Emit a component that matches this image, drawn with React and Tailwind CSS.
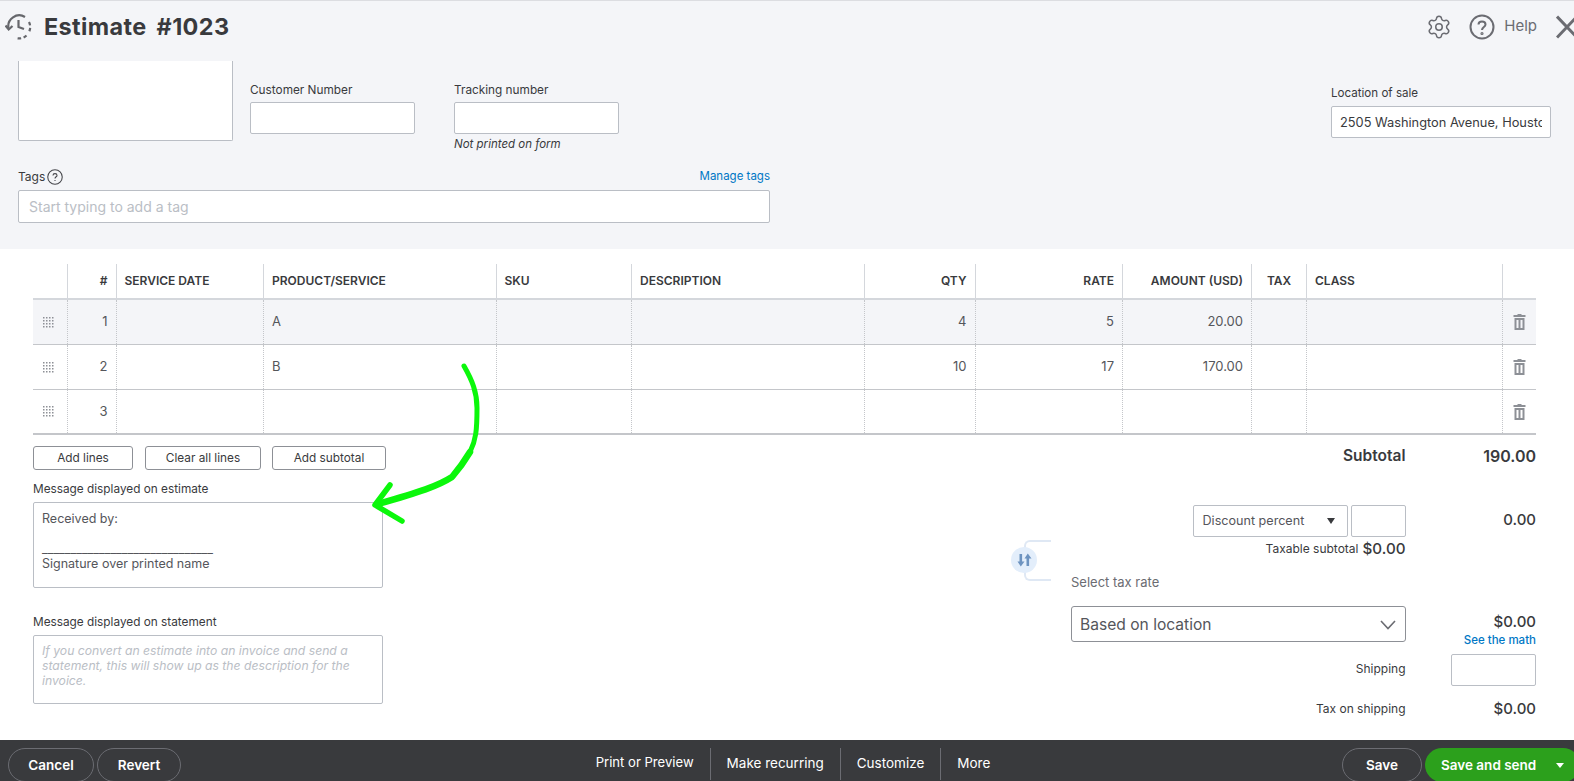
import { Settings } from 'lucide-react';

const FONT = 'font-[Inter,"Liberation_Sans",sans-serif]';
const inputCls = 'border border-[#babec5] rounded-[2px] bg-white outline-none';

function HistoryIcon() {
  return (
    <svg width="28" height="27" viewBox="0 0 28 27" fill="none" stroke="#66676c" strokeWidth="2.2">
      <path d="M3.5 15.5 A11 11 0 0 1 20 4" />
      <path d="M24 9 A11 11 0 0 1 24 19" strokeDasharray="3.5 2.5" />
      <path d="M21.5 22.5 A11 11 0 0 1 11 25" strokeDasharray="3.5 2.5" />
      <path d="M0.5 12.5 L3.7 16.5 L7.5 13" />
      <path d="M13.5 7 V14 L19 16" />
    </svg>
  );
}

function GripIcon() {
  return (
    <svg width="11" height="11" viewBox="0 0 11 11" fill="#8d9096">
      {[0, 3, 6, 9].map((y) =>
        [0, 3, 6, 9].map((x) => <rect key={`${x}-${y}`} x={x} y={y} width="1.5" height="1.5" />)
      )}
    </svg>
  );
}

function TrashIcon() {
  return (
    <svg width="13" height="16" viewBox="0 0 13 16" fill="#8d9096">
      <rect x="4.5" y="0" width="4" height="1" />
      <rect x="0.5" y="1" width="12" height="2" />
      <path d="M1.5 4h10v12h-10z M3.5 6v8h2V6z M7.5 6v8h2V6z" fillRule="evenodd" />
    </svg>
  );
}

function Arrow() {
  return (
    <svg className="absolute left-0 top-0 pointer-events-none" width="1574" height="781" fill="none" stroke="#0bf70b" strokeLinecap="round" strokeLinejoin="round">
      <path d="M464 366 C472 380 477 392 477 408 C477 430 476 440 470 452" strokeWidth="5" />
      <path d="M470 452 C464 462 458 470 452 477 C438 486 420 492 378 504" strokeWidth="6.5" />
      <path d="M390 485 L375 505 L402 521" strokeWidth="5.5" />
    </svg>
  );
}

const COLS = 'grid grid-cols-[33.5px_49px_147.5px_232.5px_135.5px_233px_110.5px_147.5px_129px_55px_195.5px_34.5px]';

const HEADERS = [
  ['', ''],
  ['#', 'text-right'],
  ['SERVICE DATE', ''],
  ['PRODUCT/SERVICE', ''],
  ['SKU', ''],
  ['DESCRIPTION', ''],
  ['QTY', 'text-right'],
  ['RATE', 'text-right'],
  ['AMOUNT (USD)', 'text-right'],
  ['TAX', 'text-center'],
  ['CLASS', ''],
  ['', ''],
];

function Row({ n, product, qty, rate, amount, active, last }) {
  const cell = 'border-l border-dotted border-[#c4c6ca] px-2 flex items-center';
  return (
    <div className={`${COLS} h-[45px] text-[13px] text-[#55565b] ${last ? 'border-b-2' : 'border-b'} border-[#c4c6ca] ${active ? 'bg-[#f4f5f8]' : ''}`}>
      <div className="flex items-center justify-center pr-[2px]"><GripIcon /></div>
      <div className={`${cell} justify-end`}>{n}</div>
      <div className={cell}></div>
      <div className={cell}>{product}</div>
      <div className={cell}></div>
      <div className={cell}></div>
      <div className={`${cell} justify-end`}>{qty}</div>
      <div className={`${cell} justify-end`}>{rate}</div>
      <div className={`${cell} justify-end`}>{amount}</div>
      <div className={cell}></div>
      <div className={cell}></div>
      <div className={`${cell} justify-center px-0`}><TrashIcon /></div>
    </div>
  );
}

function LineButton({ width, children }) {
  return (
    <button className={`${width} h-[24px] shrink-0 pt-[1px] border border-[#8d9096] rounded-[3px] text-[11.8px] text-[#393a3d] bg-white`}>{children}</button>
  );
}

function FootLink({ children, first }) {
  return (
    <div className={`h-[32px] flex items-center px-[16px] pb-[2px] text-white ${first ? 'text-[13.1px]' : 'border-l border-[#6b6c72] text-[13.5px]'}`}>{children}</div>
  );
}

export default function App() {
  return (
    <div className={`${FONT} relative h-[781px] w-[1574px] overflow-hidden flex flex-col bg-white text-[#393a3d]`}>
      {/* title bar */}
      <div className="h-[61px] shrink-0 bg-[#f4f5f8] border-t border-[#dcdde1] flex items-center pl-[5px] pb-[9px] overflow-hidden">
        <HistoryIcon />
        <h1 className="ml-[11px] text-[23.4px] font-bold tracking-[0.4px] [word-spacing:4px] text-[#393a3d]">Estimate #1023</h1>
        <div className="ml-auto flex items-center text-[#6b6c72]">
          <Settings size={26} strokeWidth={1.4} />
          <svg className="ml-[17px]" width="26" height="26" viewBox="0 0 26 26" fill="none" stroke="#6b6c72" strokeWidth="2">
            <circle cx="13" cy="13" r="11.5" />
            <path d="M9.5 10.5 C9.5 6.5 16.5 6.5 16.5 10.5 C16.5 13 13 13 13 16" />
            <circle cx="13" cy="19.5" r="0.6" />
          </svg>
          <span className="ml-[9px] text-[15px]">Help</span>
          <svg className="ml-[19px] mr-[-2px]" width="20" height="24" viewBox="0 0 20 24" fill="none" stroke="#6b6c72" strokeWidth="3">
            <path d="M1 1.5 L21 22.5 M1 22.5 L21 1.5" />
          </svg>
        </div>
      </div>

      {/* form top */}
      <div className="h-[188px] shrink-0 bg-[#f4f5f8] px-[18px]">
        <div className="flex">
          <div className="w-[214.5px] h-[80px] bg-white border border-t-0 border-[#babec5] rounded-b-[2px]"></div>
          <div className="ml-[17.5px] w-[165px] pt-[21px]">
            <div className="text-[11.8px] leading-[16px] mb-[4px]">Customer Number</div>
            <input className={`${inputCls} w-[165px] h-[32px] block`} />
          </div>
          <div className="ml-[39px] w-[165px] pt-[21px]">
            <div className="text-[11.8px] leading-[16px] mb-[4px]">Tracking number</div>
            <input className={`${inputCls} w-[165px] h-[32px] block`} />
            <div className="text-[11.5px] italic leading-[14px] mt-[3px] whitespace-nowrap">Not printed on form</div>
          </div>
          <div className="ml-auto mr-[5px] w-[220px] pt-[24px]">
            <div className="text-[11.6px] leading-[16px] mb-[5px]">Location of sale</div>
            <input readOnly value="2505 Washington Avenue, Houston" className={`${inputCls} w-[220px] h-[32px] block px-[8px] text-[12.8px]`} />
          </div>
        </div>
        <div className="w-[752px] mt-[16px]">
          <div className="flex justify-between items-center h-[20px] mb-[3px]">
            <div className="flex items-center gap-[2px] text-[12px]">
              Tags
              <svg width="16" height="16" viewBox="0 0 15 15" fill="none" stroke="#45464b" strokeWidth="1">
                <circle cx="7.5" cy="7.5" r="6.8" />
                <path d="M5.6 6 C5.6 3.8 9.4 3.8 9.4 6 C9.4 7.3 7.5 7.3 7.5 9" />
                <path d="M7.5 10.3 V11.3" />
              </svg>
            </div>
            <a className="text-[11.5px] text-[#0077c5]">Manage tags</a>
          </div>
          <input placeholder="Start typing to add a tag" className={`${inputCls} w-full h-[33px] block px-[10px] text-[14px] placeholder:text-[#babec5]`} />
        </div>
      </div>

      {/* lines + totals */}
      <div className="relative flex-1 min-h-0 pl-[33px] pt-[15px]">
        <div className="w-[1503px]">
          <div className={`${COLS} h-[36px] text-[12px] font-semibold border-b-2 border-[#d4d7dc]`}>
            {HEADERS.map(([label, align], i) => (
              <div key={i} className={`${i === 0 ? '' : 'border-l border-[#d4d7dc]'} px-2 leading-[34px] whitespace-nowrap ${align}`}>{label}</div>
            ))}
          </div>
          <Row n="1" product="A" qty="4" rate="5" amount="20.00" active />
          <Row n="2" product="B" qty="10" rate="17" amount="170.00" />
          <Row n="3" last />

          <div className="flex">
            <div className="w-[360px]">
              <div className="flex mt-[11px] whitespace-nowrap">
                <LineButton width="w-[100px]">Add lines</LineButton>
                <LineButton width="w-[116px] ml-[12px]">Clear all lines</LineButton>
                <LineButton width="w-[114px] ml-[11px]">Add subtotal</LineButton>
              </div>
              <div className="text-[11.8px] leading-[16px] mt-[11px] mb-[5px] whitespace-nowrap">Message displayed on estimate</div>
              <textarea readOnly className={`${inputCls} w-[350px] h-[86px] block resize-none px-[8px] py-[8px] text-[12.5px] leading-[15px] text-[#55565b]`} value={'Received by:\n\n______________________________\nSignature over printed name'} />
              <div className="text-[11.8px] leading-[16px] mt-[26px] mb-[5px] whitespace-nowrap">Message displayed on statement</div>
              <textarea readOnly placeholder="If you convert an estimate into an invoice and send a statement, this will show up as the description for the invoice." className={`${inputCls} w-[350px] h-[69px] block resize-none px-[8px] py-[7px] text-[12.2px] leading-[15px] italic placeholder:text-[#babec5]`} />
            </div>

            <div className="ml-auto w-[465px] text-right">
              <div className="flex justify-between items-center h-[20px] mt-[11px] font-semibold">
                <span className="flex-1 text-[15.5px]">Subtotal</span>
                <span className="w-[130.5px] text-[16px]">190.00</span>
              </div>
              <div className="flex mt-[39px] h-[32px]">
                <div className="flex-1 flex justify-end">
                  <div className={`${inputCls} w-[155px] h-[32px] flex items-center justify-between pl-[9px] pr-[12px] text-[12.6px] text-[#55565b]`}>
                    Discount percent
                    <span className="w-0 h-0 border-x-[4px] border-x-transparent border-t-[6px] border-t-[#393a3d]"></span>
                  </div>
                  <input className={`${inputCls} w-[55px] h-[32px] ml-[3px]`} />
                </div>
                <span className="w-[130.5px] text-[15px] font-medium leading-[30px]">0.00</span>
              </div>
              <div className="mr-[130.5px] h-[22px] mt-[1px] flex items-center justify-end gap-[4px] text-[12px]">
                Taxable subtotal <span className="text-[15.2px] font-medium">$0.00</span>
              </div>
              <div className="text-left text-[13px] text-[#6b6c72] h-[20px] leading-[20px] mt-[12px]">Select tax rate</div>
              <div className="flex mt-[14px] h-[36px]">
                <div className="flex-1 border border-[#8d9096] rounded-[3px] flex items-center justify-between pl-[8px] pr-[9px] pt-[1px] text-[15.6px] text-[#55565b]">
                  Based on location
                  <svg width="16" height="10" viewBox="0 0 16 10" fill="none" stroke="#6b6c72" strokeWidth="1.6">
                    <path d="M1 1 L8 8.5 L15 1" />
                  </svg>
                </div>
                <div className="w-[130.5px] pt-[6px]">
                  <div className="text-[15px] font-medium leading-[20px]">$0.00</div>
                  <div className="text-[11.5px] font-medium leading-[16px] text-[#0077c5]">See the math</div>
                </div>
              </div>
              <div className="flex mt-[12px] h-[32px] items-center">
                <span className="flex-1 text-[12px] pb-[3px]">Shipping</span>
                <div className="w-[130.5px] flex justify-end">
                  <input className={`${inputCls} w-[85px] h-[32px]`} />
                </div>
              </div>
              <div className="flex mt-[13px] h-[20px] items-center">
                <span className="flex-1 text-[12px]">Tax on shipping</span>
                <span className="w-[130.5px] text-[15px] font-medium">$0.00</span>
              </div>
            </div>
          </div>
        </div>

        {/* tax swap toggle */}
        <div className="absolute left-[1024px] top-[291px] w-[27px] h-[41px] border-2 border-r-0 border-[#dfe8f4] rounded-l-[6px]"></div>
        <div className="absolute left-[1011px] top-[298px] w-[26px] h-[26px] rounded-full bg-[#e3eefb] flex items-center justify-center">
          <svg width="15" height="14" viewBox="0 0 15 14" fill="#6d93c0">
            <path d="M2.5 1h2.6v7.5h2.4L3.8 13.5 0.5 8.5h2z" />
            <path d="M9.5 13h2.6V5.5h2.4L10.8 0.5 7.5 5.5h2z" />
          </svg>
        </div>
      </div>

      {/* action bar */}
      <div className="h-[41px] shrink-0 bg-[#393a3d] flex pt-[8px] text-white overflow-hidden">
        <button className="ml-[8px] w-[86px] h-[34px] rounded-full border border-[#6b6c72] text-[13.5px] font-semibold">Cancel</button>
        <button className="ml-[3px] w-[84px] h-[34px] rounded-full border border-[#6b6c72] text-[13.5px] font-semibold">Revert</button>
        <div className="flex-1 flex justify-center">
          <div className="flex h-[32px] ml-[63px]">
            <FootLink first>Print or Preview</FootLink>
            <FootLink>Make recurring</FootLink>
            <FootLink>Customize</FootLink>
            <FootLink>More</FootLink>
          </div>
        </div>
        <button className="w-[80px] h-[34px] rounded-full border border-[#6b6c72] text-[13.5px] font-semibold">Save</button>
        <div className="ml-[3px] mr-[-6px] w-[155px] h-[34px] rounded-full bg-[#2ca01c] flex items-center pl-[16px] pr-[16px] justify-between text-[13.5px] font-semibold">
          Save and send
          <span className="w-0 h-0 border-x-[4.5px] border-x-transparent border-t-[5px] border-t-white"></span>
        </div>
      </div>

      <Arrow />
    </div>
  );
}
